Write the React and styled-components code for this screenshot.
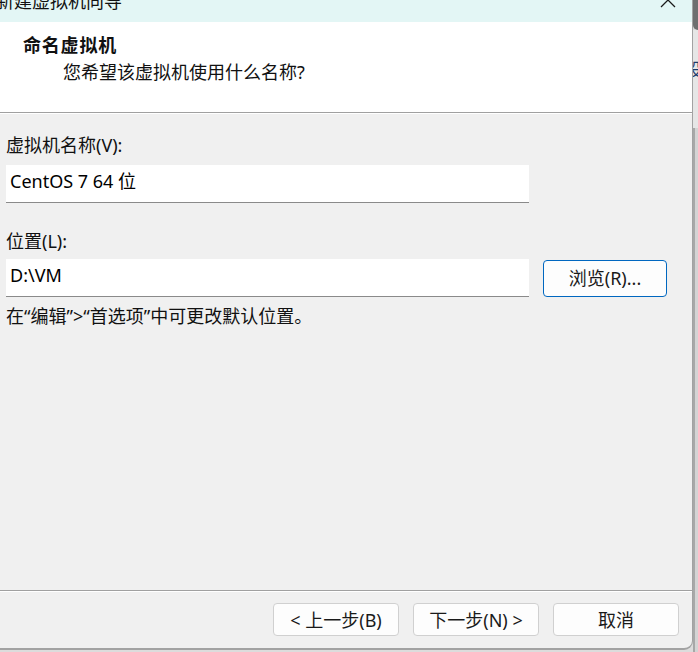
import React from 'react';
import styled, { createGlobalStyle } from 'styled-components';

const GlobalStyle = createGlobalStyle`
  html, body {
    margin: 0;
    padding: 0;
    background: #dcdcdc;
  }
  * {
    box-sizing: border-box;
  }
`;

const FONT = `"Noto Sans", "Noto Sans CJK SC", sans-serif`;

const Page = styled.div`
  display: flex;
  width: 698px;
  height: 652px;
  overflow: hidden;
  font-family: ${FONT};
  color: #111;
`;

const Dialog = styled.div`
  display: flex;
  flex-direction: column;
  width: 693px;
  height: 650px;
  flex-shrink: 0;
  background: #f0f0f0;
  border-right: 1px solid #a2a2a2;
  border-bottom: 2px solid #a2a2a2;
  border-bottom-right-radius: 9px;
  overflow: hidden;
`;

const Side = styled.div`
  flex: 1;
  display: flex;
  flex-direction: column;
  background: #d9d9d9;
  overflow: hidden;
`;

const SideTop = styled.div`
  height: 30px;
  background: #6f6f6f;
  border-bottom-left-radius: 6px;
`;

const SideMid = styled.div`
  height: 98px;
  background: #e6e6e6;
  padding-top: 30px;
  font-size: 17px;
  line-height: 20px;
  color: #1d3b6b;
  white-space: nowrap;
  text-indent: -8px;
`;

const SideRest = styled.div`
  flex: 1;
  background: #d4d4d4;
  border-left: 2px solid #a8a8a8;
`;

const TitleBar = styled.div`
  display: flex;
  justify-content: space-between;
  height: 22px;
  background: #e3f6f5;
  overflow: hidden;
  flex-shrink: 0;
`;

const TitleText = styled.div`
  margin-top: -11px;
  margin-left: -4px;
  font-size: 18px;
  line-height: 24px;
  color: #111;
`;

const CloseIcon = styled.svg`
  margin-top: -8px;
  margin-right: 16px;
  flex-shrink: 0;
`;

const Header = styled.div`
  height: 91px;
  flex-shrink: 0;
  background: #fff;
  border-bottom: 1px solid #a0a0a0;
  box-shadow: 0 1px 0 #fff;
  padding-top: 11px;
`;

const HeaderTitle = styled.div`
  padding-left: 23px;
  font-size: 18px;
  line-height: 24px;
  font-weight: 700;
  letter-spacing: 0.8px;
`;

const HeaderSub = styled.div`
  margin-top: 3px;
  padding-left: 63px;
  font-size: 18px;
  line-height: 24px;
`;

const Body = styled.div`
  flex: 1;
  padding: 20px 6px 0;
`;

const Label = styled.div`
  font-size: 18px;
  line-height: 24px;
  margin-top: ${(p) => p.$top || 0}px;
`;

const Row = styled.div`
  display: flex;
  align-items: center;
  margin-top: ${(p) => p.$top || 0}px;
`;

const TextBox = styled.div`
  width: 523px;
  height: 38px;
  background: #fff;
  border-bottom: 1px solid #8a8a8a;
  padding: 4px 4px 0;
  font-size: 18px;
  line-height: 24px;
  color: #000;
`;

const Button = styled.div`
  display: flex;
  align-items: center;
  justify-content: center;
  width: ${(p) => p.$w || 126}px;
  height: ${(p) => p.$h || 33}px;
  margin-left: ${(p) => p.$ml || 0}px;
  background: #fdfdfd;
  border: 1px solid ${(p) => (p.$focus ? '#0067c0' : '#d0d0d0')};
  border-radius: 4px;
  font-size: 18px;
  line-height: 24px;
  color: #1a1a1a;
  white-space: pre;
`;

const Note = styled.div`
  margin-top: 7px;
  font-size: 18px;
  line-height: 24px;
`;

const Footer = styled.div`
  flex-shrink: 0;
  display: flex;
  justify-content: flex-end;
  gap: 14px;
  height: 58px;
  padding: 12px 13px 0 0;
  border-top: 1px solid #a0a0a0;
  box-shadow: inset 0 1px 0 #fff;
`;

const App = () => {
  return (
    <>
      <GlobalStyle />
      <Page>
        <Dialog>
          <TitleBar>
            <TitleText>新建虚拟机向导</TitleText>
            <CloseIcon width="16" height="16" viewBox="0 0 16 16">
              <path d="M1 1 L15 15 M15 1 L1 15" stroke="#1a1a1a" strokeWidth="1.3" fill="none" />
            </CloseIcon>
          </TitleBar>
          <Header>
            <HeaderTitle>命名虚拟机</HeaderTitle>
            <HeaderSub>您希望该虚拟机使用什么名称?</HeaderSub>
          </Header>
          <Body>
            <Label>虚拟机名称(V):</Label>
            <Row $top={8}>
              <TextBox>CentOS 7 64 位</TextBox>
            </Row>
            <Label $top={26}>位置(L):</Label>
            <Row $top={6}>
              <TextBox>D:\VM</TextBox>
              <Button $focus $w={124} $h={37} $ml={14}>浏览(R)...</Button>
            </Row>
            <Note>在“编辑”&gt;“首选项”中可更改默认位置。</Note>
          </Body>
          <Footer>
            <Button>{'< 上一步(B)'}</Button>
            <Button>{'下一步(N) >'}</Button>
            <Button>取消</Button>
          </Footer>
        </Dialog>
        <Side>
          <SideTop />
          <SideMid>设</SideMid>
          <SideRest />
        </Side>
      </Page>
    </>
  );
};

export default App;
